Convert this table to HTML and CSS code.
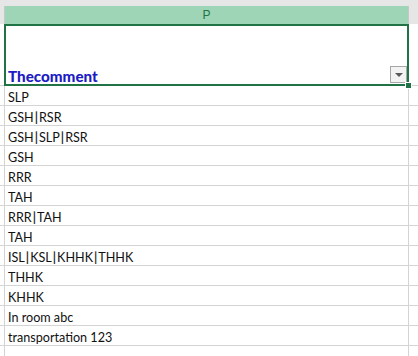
FILE: index.html
```html
<!DOCTYPE html>
<html>
<head>
<meta charset="utf-8">
<link rel="stylesheet" href="styles.css">
</head>
<body>
<div class="sheet">
  <div class="topstrip"></div>
  <div class="colhdr">
    <div class="corner"></div>
    <div class="colp">P</div>
    <div class="colnext"></div>
  </div>
  <div class="row head">
    <div class="rh"></div>
    <div class="hcell">
      <span class="title">Thecomment</span>
      <span class="dd"><span class="tri"></span></span>
      <span class="handle"></span>
    </div>
    <div class="n"></div>
  </div>
  <div class="row"><div class="rh"></div><div class="c">SLP</div><div class="n"></div></div>
  <div class="row"><div class="rh"></div><div class="c">GSH<span class="p">|</span>RSR</div><div class="n"></div></div>
  <div class="row"><div class="rh"></div><div class="c">GSH<span class="p">|</span>SLP<span class="p">|</span>RSR</div><div class="n"></div></div>
  <div class="row"><div class="rh"></div><div class="c">GSH</div><div class="n"></div></div>
  <div class="row"><div class="rh"></div><div class="c">RRR</div><div class="n"></div></div>
  <div class="row"><div class="rh"></div><div class="c">TAH</div><div class="n"></div></div>
  <div class="row"><div class="rh"></div><div class="c">RRR<span class="p">|</span>TAH</div><div class="n"></div></div>
  <div class="row"><div class="rh"></div><div class="c">TAH</div><div class="n"></div></div>
  <div class="row"><div class="rh"></div><div class="c">ISL<span class="p">|</span>KSL<span class="p">|</span>KHHK<span class="p">|</span>THHK</div><div class="n"></div></div>
  <div class="row"><div class="rh"></div><div class="c">THHK</div><div class="n"></div></div>
  <div class="row"><div class="rh"></div><div class="c">KHHK</div><div class="n"></div></div>
  <div class="row"><div class="rh"></div><div class="c">In room abc</div><div class="n"></div></div>
  <div class="row"><div class="rh"></div><div class="c">transportation 123</div><div class="n"></div></div>
  <div class="row"><div class="rh"></div><div class="c"></div><div class="n"></div></div>
</div>
</body>
</html>
```
FILE: styles.css
```css
* { box-sizing: border-box; }
html, body { margin: 0; padding: 0; background: #fff; }
body { font-family: Lato, "Open Sans", sans-serif; }
.sheet {
  width: 418px;
  height: 356px;
  overflow: hidden;
  display: flex;
  flex-direction: column;
  background: #fff;
}
.topstrip { height: 6px; flex: none; background: #e6e6e6; }
.colhdr { display: flex; height: 18px; flex: none; }
.corner { width: 5px; background: #e6e6e6; border-right: 1px solid #c8c8c8; }
.colp {
  width: 403px;
  background: #9fd5b7;
  color: #217346;
  font-family: "Liberation Sans", sans-serif;
  font-size: 12px;
  line-height: 18px;
  text-align: center;
}
.colnext { flex: 1; background: #e6e6e6; border-left: 1px solid #c6c6c6; }

.row { display: flex; height: 20px; flex: none; }
.row > div { border-bottom: 1px solid #d4d4d4; }
.rh { width: 5px; border-right: 1px solid #d4d4d4; }
.c {
  width: 404px;
  border-right: 1px solid #d4d4d4;
  padding: 3px 0 0 3px;
  font-size: 12.6px;
  line-height: 17px;
  color: #111;
  white-space: nowrap;
}
.p { margin: 0 1px; font-weight: bold; color: #333; }
.n { flex: 1; }

.row.head { height: 62px; }
.row.head > .rh { width: 4px; border-right: none; border-bottom: 1px solid #d4d4d4; }
.row.head > .hcell {
  position: relative;
  width: 405px;
  border: 2px solid #217346;
  display: flex;
  justify-content: space-between;
  align-items: flex-end;
  padding: 0 0 0 2px;
}
.title {
  color: #1c1cc4;
  font-weight: 900;
  font-size: 15.2px;
  line-height: 15px;
}
.dd {
  width: 17px;
  height: 17px;
  margin-bottom: 1px;
  border: 1px solid #a6a6a6;
  background: #f3f3f3;
  display: flex;
  align-items: center;
  justify-content: center;
}
.tri {
  width: 0;
  height: 0;
  border-left: 4px solid transparent;
  border-right: 4px solid transparent;
  border-top: 4px solid #5a5a5a;
}
.handle {
  position: absolute;
  right: -5px;
  bottom: -5px;
  width: 7px;
  height: 7px;
  background: #217346;
  border: 1px solid #fff;
}
```
